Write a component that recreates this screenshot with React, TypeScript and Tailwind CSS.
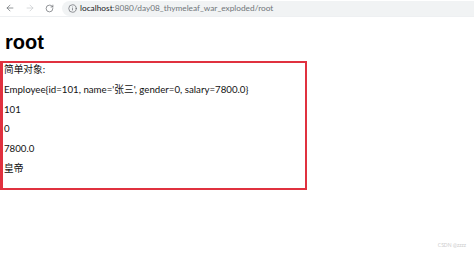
import { ArrowLeft, ArrowRight, RotateCw, Info } from 'lucide-react';

const lines = [
  '简单对象:',
  "Employee{id=101, name='张三', gender=0, salary=7800.0}",
  '101',
  '0',
  '7800.0',
  '皇帝',
];

const App = () => {
  return (
    <div className="w-[474px] h-[253px] bg-white relative overflow-hidden font-['Lato','Noto_Sans_CJK_SC',sans-serif]">
      {/* browser bar */}
      <div className="flex items-center h-[17px] border-b border-[#eef0f2]">
        <div className="flex items-center gap-[10px] pl-[5px] pr-[8px] text-[#5f6368]">
          <ArrowLeft size={10} strokeWidth={1.6} />
          <ArrowRight size={10} strokeWidth={1.6} className="text-[#c4c7ca]" />
          <RotateCw size={9} strokeWidth={1.8} />
        </div>
        <div className="flex-1 h-[15px] rounded-l-full bg-[#f1f3f4] flex items-center pl-[6px] gap-[3px] text-[8.3px]">
          <Info size={9} strokeWidth={1.8} className="text-[#5f6368]" />
          <span className="text-[#202124]">localhost</span>
          <span className="text-[#70757a] -ml-[3px]">:8080/day08_thymeleaf_war_exploded/root</span>
        </div>
      </div>

      <h1 className="pl-[5px] pt-[12px] text-[20px] leading-[27px] font-bold text-black font-['Liberation_Sans','Noto_Sans_CJK_SC',sans-serif]">
        root
      </h1>

      <div className="mt-[5px] w-[307px] h-[129px] border-2 border-l-[3px] border-[#e0313f] pl-[1px] flex flex-col gap-[7.8px]">
        {lines.map((t, i) => (
          <p key={i} className="text-[9.7px] leading-[12px] text-[#111]">
            {t}
          </p>
        ))}
      </div>

      <div className="absolute right-[8px] bottom-[4px] text-[5px] text-[#ccc]">CSDN @zzzz</div>
    </div>
  );
};

export default App;
